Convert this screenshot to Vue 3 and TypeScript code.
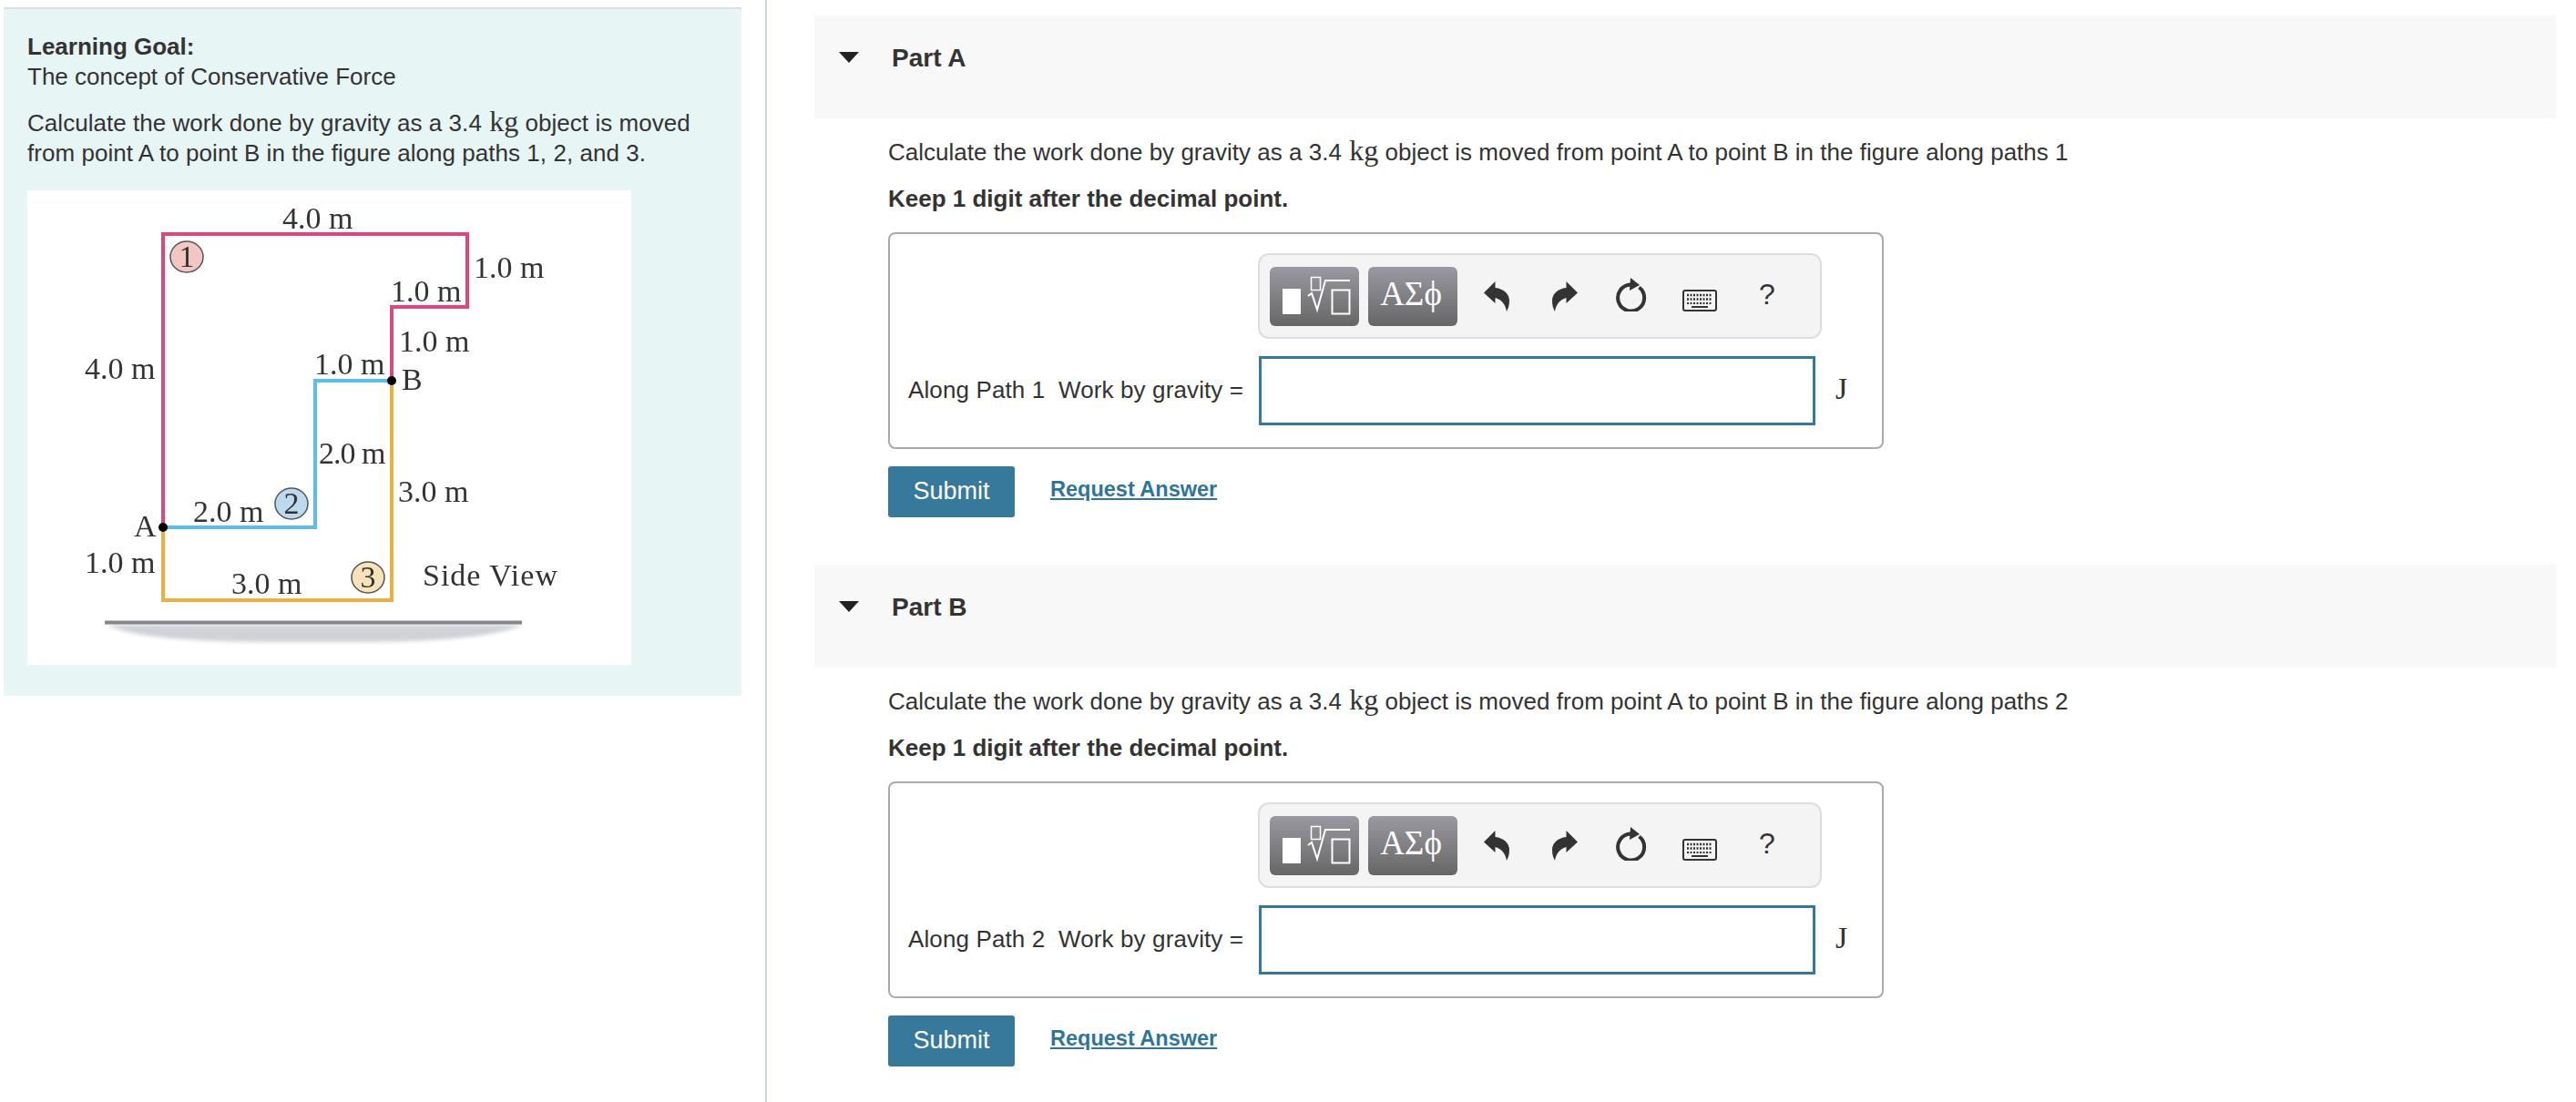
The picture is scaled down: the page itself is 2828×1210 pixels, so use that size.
<template>
  <div class="page">
    <aside class="side">
      <div class="goal">
        <p class="goal-title"><strong>Learning Goal:</strong><br />The concept of Conservative Force</p>
        <p class="goal-text">
          Calculate the work done by gravity as a 3.4 <span class="unit">kg</span> object is moved<br />
          from point A to point B in the figure along paths 1, 2, and 3.
        </p>
        <svg class="figure" viewBox="30 209 663 521" width="663" height="521">
          <defs>
            <filter id="soft" x="-5%" y="-30%" width="110%" height="160%">
              <feGaussianBlur stdDeviation="2" />
            </filter>
          </defs>
          <path d="M117 686 H575 Q535 704 400 705 H290 Q150 704 117 686 Z" fill="#cfd2d6" filter="url(#soft)" />
          <rect x="115" y="681.500" width="458" height="4" fill="#84868a" />
          <path d="M179 579 V257 H513 V337 H430 V418" class="line" stroke="#e0457f" />
          <path d="M179 579 H346 V418 H430" class="line" stroke="#5cbde9" />
          <path d="M179 579 V659 H430 V418" class="line" stroke="#edb03f" />
          <circle cx="179" cy="579" r="5" fill="#000" />
          <circle cx="430" cy="418" r="5" fill="#000" />
          <g v-for="c in circles" :key="c.n">
            <ellipse :cx="c.x" :cy="c.y" rx="18" ry="17" :fill="c.fill" stroke="#555" stroke-width="1.500" />
            <text :x="c.x" :y="c.y + 11" text-anchor="middle" class="fig-text">{{ c.n }}</text>
          </g>
          <text
            v-for="l in labels"
            :key="l.x + '-' + l.y"
            :x="l.x"
            :y="l.y"
            class="fig-text"
            :class="l.cls"
          >{{ l.t }}</text>
        </svg>
      </div>
    </aside>

    <main class="main">
      <section v-for="p in parts" :key="p.name" class="part">
        <header class="part-head">
          <svg class="caret" width="22" height="12" viewBox="0 0 22 12"><path d="M0 0 H22 L11 12 Z" fill="#222" /></svg>
          <h2>Part {{ p.name }}</h2>
        </header>
        <div class="part-body">
          <p class="question">
            Calculate the work done by gravity as a 3.4 <span class="unit">kg</span> object is moved from point A to point B in the figure along paths {{ p.path }}
          </p>
          <p class="keep">Keep 1 digit after the decimal point.</p>
          <div class="answer">
            <div class="toolbar">
              <div class="tool-btn">
                <svg width="98" height="65" viewBox="0 0 98 65">
                  <rect x="14" y="24" width="20" height="28" fill="#fff" />
                  <rect x="45.500" y="11.500" width="10" height="14" fill="none" stroke="#fff" stroke-width="1.500" />
                  <path d="M42 32 L46 29 L52 47 L61 15 H88" fill="none" stroke="#fff" stroke-width="2" />
                  <rect x="68.500" y="25.500" width="19" height="26" fill="none" stroke="#fff" stroke-width="2" />
                </svg>
              </div>
              <div class="tool-btn tool-text">ΑΣϕ</div>
              <svg class="tool-icon undo" width="28" height="33" viewBox="0 0 28 33">
                <path d="M0 12.500 L12.500 0 V7 C22 8 28 14 28 21 C28 26 27 29 25 33 C24 26 20 20 12.500 18 V24 Z" fill="#333" />
              </svg>
              <svg class="tool-icon redo" width="28" height="33" viewBox="0 0 28 33">
                <path d="M28 12.500 L15.500 0 V7 C6 8 0 14 0 21 C0 26 1 29 3 33 C4 26 8 20 15.500 18 V24 Z" fill="#333" />
              </svg>
              <svg class="tool-icon reload" width="34" height="37" viewBox="0 0 34 37">
                <path d="M25.500 10.500 A14.500 14.500 0 1 1 16 7.500" fill="none" stroke="#333" stroke-width="4" />
                <path d="M16 0 L26 8 L15 14 Z" fill="#333" />
              </svg>
              <svg class="tool-icon keyboard" width="38" height="24" viewBox="0 0 38 24">
                <rect x="1" y="1" width="36" height="22" rx="2" fill="none" stroke="#333" stroke-width="2" />
                <path d="M5 6 H33 M5 10.500 H33" stroke="#333" stroke-width="2.500" stroke-dasharray="2 1.500" />
                <path d="M5 15 H33" stroke="#333" stroke-width="2" stroke-dasharray="2 1.500" />
                <path d="M10 19 H28" stroke="#333" stroke-width="2" />
              </svg>
              <span class="help">?</span>
            </div>
            <div class="answer-row">
              <label>Along Path {{ p.path }}&nbsp; Work by gravity =</label>
              <input class="field" type="text" />
              <span class="j">J</span>
            </div>
          </div>
          <div class="actions">
            <button class="submit">Submit</button>
            <a class="request">Request Answer</a>
          </div>
        </div>
      </section>
    </main>
  </div>
</template>

<script setup lang="ts">
const parts = [
  { name: "A", path: 1 },
  { name: "B", path: 2 },
];

const circles = [
  { n: 1, x: 205, y: 282, fill: "#f3c6c2" },
  { n: 2, x: 320, y: 553, fill: "#bcd9f0" },
  { n: 3, x: 404, y: 634, fill: "#f6e3ba" },
];

// page coordinates, the svg viewBox starts at the figure's corner
const labels: { t: string; x: number; y: number; cls?: string }[] = [
  { t: "4.0 m", x: 310, y: 251 },
  { t: "1.0 m", x: 520, y: 305 },
  { t: "1.0 m", x: 429, y: 331 },
  { t: "1.0 m", x: 438, y: 386 },
  { t: "1.0 m", x: 345, y: 411 },
  { t: "B", x: 441, y: 428 },
  { t: "4.0 m", x: 93, y: 416 },
  { t: "2.0 m", x: 350, y: 509, cls: "tight" },
  { t: "3.0 m", x: 437, y: 551 },
  { t: "2.0 m", x: 212, y: 573 },
  { t: "A", x: 147, y: 589 },
  { t: "1.0 m", x: 93, y: 629 },
  { t: "3.0 m", x: 254, y: 652 },
  { t: "Side View", x: 464, y: 643, cls: "wide" },
];
</script>

<style>
html,
body {
  margin: 0;
  background: #fff;
}
</style>

<style scoped>
.page {
  display: flex;
  width: 2828px;
  height: 1210px;
  overflow: hidden;
  font-family: "Liberation Sans", Arial, sans-serif;
  font-size: 26px;
  color: #333;
}
.side {
  box-sizing: border-box;
  width: 842px;
  flex: none;
  padding: 8px 0 0 4px;
  border-right: 2px solid #c5d5e6;
}
.goal {
  box-sizing: border-box;
  width: 810px;
  height: 756px;
  padding: 25px 26px 0;
  background: #e7f5f5;
  border-top: 2px solid #dcdfdf;
}
.goal p {
  margin: 0;
  line-height: 33px;
}
.goal .goal-text {
  margin-top: 16px;
  letter-spacing: 0.04px;
}
.figure {
  display: block;
  margin-top: 24px;
  background: #fff;
  filter: blur(0.4px);
}
.line {
  fill: none;
  stroke-width: 4;
}
.fig-text {
  font-family: "Liberation Serif", serif;
  font-size: 34px;
  fill: #333;
}
.wide {
  letter-spacing: 1px;
}
.tight {
  letter-spacing: -1px;
}
.unit {
  margin-left: 1px;
  font-family: "Liberation Serif", serif;
  font-size: 32px;
}
.main {
  flex: 1;
  padding: 17px 22px 0 52px;
}
.part {
  height: 603px;
}
.part-head {
  display: flex;
  align-items: flex-start;
  box-sizing: border-box;
  height: 113px;
  padding: 40px 0 0 27px;
  background: #f8f8f8;
}
.part-head h2 {
  margin: -11px 0 0 36px;
  font-size: 28px;
  line-height: 36px;
  font-weight: bold;
}
.part-body {
  padding: 17px 0 0 81px;
}
.question {
  margin: 0;
  line-height: 36px;
  letter-spacing: 0.02px;
}
.keep {
  margin: 15px 0 0;
  font-weight: bold;
  line-height: 36px;
}
.answer {
  box-sizing: border-box;
  width: 1093px;
  height: 238px;
  margin-top: 19px;
  padding: 21px 0 0 20px;
  border: 2px solid #aaa;
  border-radius: 8px;
}
.toolbar {
  display: flex;
  align-items: center;
  box-sizing: border-box;
  width: 619px;
  height: 94px;
  margin-left: 384px;
  padding-left: 11px;
  background: #f4f4f4;
  border: 2px solid #ddd;
  border-radius: 12px;
}
.tool-btn {
  width: 98px;
  height: 65px;
  margin-right: 10px;
  border-radius: 6px;
  background: linear-gradient(#9b99a1, #666);
  color: #fff;
}
.tool-btn svg {
  display: block;
}
.tool-text {
  font-family: "Liberation Serif", serif;
  font-size: 37px;
  line-height: 60px;
  text-align: center;
  text-indent: -4px;
}
.tool-icon {
  flex: none;
}
.undo {
  margin-left: 19px;
}
.redo {
  margin-left: 47px;
}
.reload {
  margin-left: 42px;
  margin-top: -3px;
}
.keyboard {
  margin-left: 39px;
  margin-top: 10px;
}
.help {
  margin-left: 46px;
  font-size: 32px;
  margin-top: -4px;
}
.answer-row {
  display: flex;
  align-items: center;
  height: 76px;
  margin-top: 19px;
}
.answer-row label {
  width: 385px;
  flex: none;
  margin-top: -2px;
  letter-spacing: 0.12px;
}
.field {
  box-sizing: border-box;
  width: 611px;
  height: 76px;
  border: 3px solid #35789b;
  background: #fff;
  border-radius: 0;
  outline: none;
}
.j {
  margin: -4px 0 0 22px;
  font-family: "Liberation Serif", serif;
  font-size: 34px;
}
.actions {
  display: flex;
  align-items: center;
  margin-top: 19px;
}
.submit {
  width: 139px;
  height: 56px;
  padding: 0 0 2px;
  border: none;
  border-radius: 3px;
  background: #37799b;
  color: #fff;
  font: 27px "Liberation Sans", Arial, sans-serif;
}
.request {
  margin: -5px 0 0 39px;
  color: #2f7599;
  font-size: 23.500px;
  font-weight: bold;
  text-decoration: underline;
}
</style>
